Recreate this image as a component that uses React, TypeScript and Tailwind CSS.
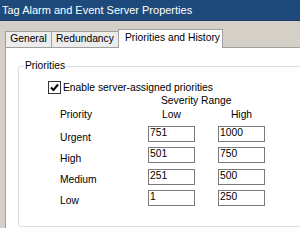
import React from 'react';

const rows = [
  { label: 'Urgent', low: '751', high: '1000' },
  { label: 'High', low: '501', high: '750' },
  { label: 'Medium', low: '251', high: '500' },
  { label: 'Low', low: '1', high: '250' },
];

const Box: React.FC<{ value: string }> = ({ value }) => (
  <div className="w-[47px] h-[16px] shrink-0 bg-white border border-[#7a7a7a] pl-[1px] leading-[11px] text-[10.3px]">
    {value}
  </div>
);

export default function App() {
  return (
    <div className="w-[300px] h-[228px] overflow-hidden bg-[#d4d0c8] flex flex-col font-['Liberation_Sans',Arial,sans-serif] text-black">
      {/* title bar */}
      <div className="h-[21px] shrink-0 bg-[#1d4a7b] border-b border-[#173d66] text-white text-[11px] leading-[20px] pl-[2px] whitespace-nowrap">
        Tag Alarm and Event Server Properties
      </div>

      {/* tabs */}
      <div className="h-[26px] shrink-0 flex items-end pl-[5px] relative z-10 text-[10.3px] whitespace-nowrap">
        <div className="w-[47px] h-[16px] bg-[#ececec] border-l border-t border-r border-[#a0a0a0] text-center leading-[14px]">
          General
        </div>
        <div className="w-[66px] h-[16px] bg-[#ececec] border-t border-[#a0a0a0] text-center leading-[14px]">
          Redundancy
        </div>
        <div className="w-[105px] h-[19px] -mb-[1px] bg-white border-l border-t border-r border-[#a0a0a0] text-center leading-[15px] pl-[4px]">
          Priorities and History
        </div>
      </div>

      {/* tab panel */}
      <div className="flex-1 ml-[5px] w-[320px] bg-white border-l border-t border-[#a0a0a0]">
        <fieldset className="ml-[12px] mt-[12px] w-[300px] h-[167px] border border-[#d5dfe5] rounded-[3px] text-[10.3px]">
          <legend className="ml-[5px] px-[1px] leading-[12px]">Priorities</legend>

          <div className="mt-[9px] ml-[29px] flex items-center gap-[2px] h-[13px]">
            <div className="w-[13px] h-[13px] border border-[#333] bg-white flex items-center justify-center">
              <svg width="11" height="11" viewBox="0 0 11 11">
                <polyline points="2,5.5 4.5,8 9,2.5" fill="none" stroke="#000" strokeWidth="2" />
              </svg>
            </div>
            <span className="leading-[12px] whitespace-nowrap">Enable server-assigned priorities</span>
          </div>

          <div className="mt-[1px] ml-[142px] leading-[12px] whitespace-nowrap">Severity Range</div>

          <div className="mt-[2px] ml-[41px] flex leading-[12px]">
            <div className="w-[88px]">Priority</div>
            <div className="w-[47px] text-center">Low</div>
            <div className="w-[23px]" />
            <div className="w-[47px] text-center">High</div>
          </div>

          <div className="mt-[5px] ml-[41px] flex flex-col gap-[5.33px]">
            {rows.map((r) => (
              <div key={r.label} className="flex h-[16px]">
                <div className="w-[88px] pt-[5.5px] leading-[12px]">{r.label}</div>
                <Box value={r.low} />
                <div className="w-[23px]" />
                <Box value={r.high} />
              </div>
            ))}
          </div>
        </fieldset>
      </div>
    </div>
  );
}
